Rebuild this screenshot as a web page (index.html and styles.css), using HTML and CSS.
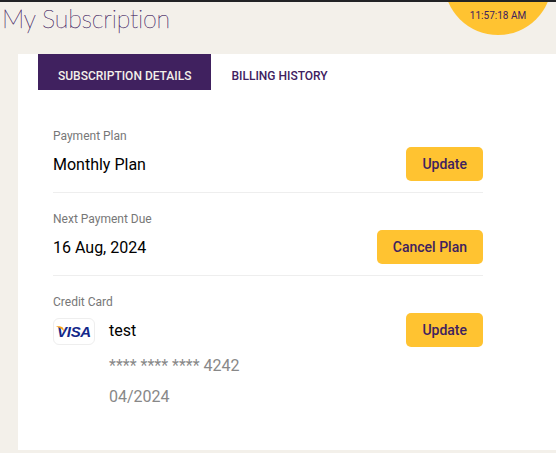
FILE: index.html
```html
<!DOCTYPE html>
<html lang="en">
<head>
  <meta charset="UTF-8" />
  <meta name="viewport" content="width=device-width, initial-scale=1.0" />
  <title>My Subscription</title>
  <link rel="stylesheet" href="styles.css">
</head>
<body>

  <div class="clock">11:57:18 AM</div>

  <h1 class="page-title">My Subscription</h1>

  <div class="card">
    <div class="tabs">
      <div class="tab active">SUBSCRIPTION DETAILS</div>
      <div class="tab">BILLING HISTORY</div>
    </div>

    <div class="rows">
      <div class="row">
        <div class="info">
          <div class="label">Payment Plan</div>
          <div class="value">Monthly Plan</div>
        </div>
        <button class="btn">Update</button>
      </div>

      <div class="row">
        <div class="info">
          <div class="label">Next Payment Due</div>
          <div class="value">16 Aug, 2024</div>
        </div>
        <button class="btn">Cancel Plan</button>
      </div>

      <div class="row last">
        <div class="info">
          <div class="label">Credit Card</div>
          <div class="cc">
            <div class="visa">
              <svg class="swoosh" width="9" height="7" viewBox="0 0 9 7"><path d="M0 0.4 C3.5 0.2 6.5 0.6 7.2 2.2 L8.4 6.2 C7 3.4 4 1.4 0 0.4 Z" fill="#f7a21b"/></svg>
              <span>VISA</span>
            </div>
            <div class="cc-text">
              <div class="value card-name">test</div>
              <div class="muted">**** **** **** 4242</div>
              <div class="muted">04/2024</div>
            </div>
          </div>
        </div>
        <button class="btn">Update</button>
      </div>
    </div>
  </div>

</body>
</html>
```

FILE: styles.css
```css
html, body {
  height: 100%;
}
body {
  margin: 0;
  font-family: Roboto, sans-serif;
  background: #f3f0ea;
  border-top: 2px solid #222326;
  box-sizing: border-box;
  overflow: hidden;
  position: relative;
}
.clock {
  position: absolute;
  top: -75px;
  left: 444px;
  width: 108px;
  height: 108px;
  border-radius: 50%;
  background: #ffc331;
  color: #40215f;
  font-size: 10px;
  font-weight: 400;
  line-height: 12px;
  text-align: center;
  padding-top: 83px;
  box-sizing: border-box;
}
.page-title {
  margin: 0;
  height: 52px;
  padding-left: 2px;
  font-family: Lato, sans-serif;
  font-size: 25px;
  font-weight: 100;
  letter-spacing: -0.2px;
  -webkit-text-stroke: 0.25px #40215f;
  line-height: 32px;
  color: #40215f;
}
.card {
  margin-left: 18px;
  height: 396px;
  background: #fff;
}
.tabs {
  display: flex;
  padding-left: 20px;
}
.tab {
  height: 36px;
  line-height: 44px;
  padding: 0 20px;
  font-size: 12px;
  font-weight: 500;
  color: #40215f;
}
.tab.active {
  background: #40215f;
  color: #f3f0ea;
}
.rows {
  width: 430px;
  margin-left: 35px;
  padding-top: 39px;
}
.row {
  display: flex;
  justify-content: space-between;
  align-items: flex-start;
  height: 63px;
  margin-bottom: 19px;
  border-bottom: 1px solid #eeeeee;
}
.row.last {
  border-bottom: none;
}
.label {
  font-size: 12px;
  line-height: 14px;
  color: #777;
}
.value {
  margin-top: 12px;
  font-size: 16px;
  line-height: 19px;
  color: #000;
}
.card-name {
  margin-bottom: 18px;
}
.btn {
  margin-top: 18px;
  height: 34px;
  padding: 0 16px;
  border: none;
  border-radius: 5px;
  background: #ffc331;
  color: #40215f;
  font-family: Roboto, sans-serif;
  font-size: 14px;
  font-weight: 500;
}
.cc {
  display: flex;
  gap: 14px;
}
.visa {
  margin-top: 9px;
  width: 42px;
  height: 27px;
  box-sizing: border-box;
  border: 1px solid #eeeeee;
  border-radius: 6px;
  display: flex;
  align-items: center;
  justify-content: center;
  position: relative;
}
.visa span {
  font-family: "Liberation Sans", sans-serif;
  font-size: 15px;
  font-weight: 700;
  font-style: italic;
  letter-spacing: -0.3px;
  color: #14288a;
}
.swoosh {
  position: absolute;
  left: 2px;
  top: 7px;
}
.muted {
  margin-top: 15px;
  font-size: 16px;
  line-height: 16px;
  color: #888;
}
.card-name + .muted {
  margin-top: 0;
}
```
